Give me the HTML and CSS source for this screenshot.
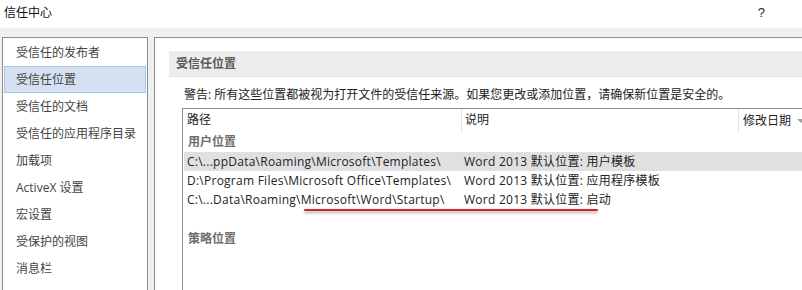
FILE: index.html
```html
<!DOCTYPE html>
<html lang="zh-CN">
<head>
<meta charset="utf-8">
<title>信任中心</title>
<link rel="stylesheet" href="styles.css">
</head>
<body>
<div class="titlebar">
  <span class="title">信任中心</span>
  <span class="help">?</span>
</div>
<div class="main">
  <ul class="nav">
    <li>受信任的发布者</li>
    <li class="active">受信任位置</li>
    <li>受信任的文档</li>
    <li>受信任的应用程序目录</li>
    <li>加载项</li>
    <li>ActiveX 设置</li>
    <li>宏设置</li>
    <li>受保护的视图</li>
    <li>消息栏</li>
  </ul>
  <div class="content">
    <div class="section-head">受信任位置</div>
    <div class="section-body">
      <p class="warning">警告: 所有这些位置都被视为打开文件的受信任来源。如果您更改或添加位置，请确保新位置是安全的。</p>
      <div class="table">
        <div class="thead">
          <div class="th col-path">路径</div>
          <div class="th col-desc">说明</div>
          <div class="th col-date">修改日期<span class="sort"></span></div>
        </div>
        <div class="group">用户位置</div>
        <div class="row selected">
          <div class="col-path">C:\...ppData\Roaming\Microsoft\Templates\</div>
          <div class="col-desc">Word 2013 默认位置: 用户模板</div>
        </div>
        <div class="row">
          <div class="col-path">D:\Program Files\Microsoft Office\Templates\</div>
          <div class="col-desc">Word 2013 默认位置: 应用程序模板</div>
        </div>
        <div class="row">
          <div class="col-path">C:\...Data\Roaming\Microsoft\Word\Startup\</div>
          <div class="col-desc">Word 2013 默认位置: 启动</div>
          <span class="mark"></span>
        </div>
        <div class="group policy">策略位置</div>
      </div>
    </div>
  </div>
</div>
</body>
</html>
```
FILE: styles.css
```css
* { box-sizing: border-box; }
html, body { margin: 0; padding: 0; }
body {
  width: 802px;
  height: 290px;
  overflow: hidden;
  background: #f0f0f0;
  font-family: "Open Sans", "Noto Sans CJK SC", sans-serif;
  font-size: 12px;
  color: #222;
}
.titlebar {
  height: 28px;
  background: #fff;
  display: flex;
  align-items: center;
  justify-content: space-between;
  padding: 0 37px 4px 4px;
}
.title { font-size: 12px; color: #111; }
.help { font-size: 13px; color: #222; font-family: "Liberation Sans", sans-serif; }
.main {
  display: flex;
  gap: 6px;
  padding: 9px 0 0 2px;
  height: 262px;
  overflow: hidden;
}
.nav {
  list-style: none;
  margin: 0;
  padding: 1px 1px 0 1px;
  width: 146px;
  height: 270px;
  background: #fff;
  border: 1px solid #8d8d8d;
  flex: none;
}
.nav li {
  height: 27px;
  line-height: 25px;
  padding-left: 11px;
  color: #444;
  border: 1px solid transparent;
  white-space: nowrap;
}
.nav li.active {
  background: #d5e1f2;
  border-color: #a8c4e8;
}
.content {
  flex: 1;
  min-width: 0;
  height: 270px;
  background: #fff;
  border: 1px solid #8d8d8d;
  border-right: none;
  padding: 13px 0 0 14px;
  overflow: hidden;
}
.section-head {
  height: 26px;
  line-height: 25px;
  background: #ececec;
  border-bottom: 1px solid #e2e2e2;
  padding-left: 7px;
  font-weight: bold;
  color: #5a5a5a;
}
.section-body { padding: 0 0 0 13px; }
.warning {
  margin: 0;
  height: 31px;
  line-height: 36px;
  padding-left: 2px;
  color: #222;
  white-space: nowrap;
}
.table {
  border: 1px solid #8d8d8d;
  border-right: none;
  height: 200px;
  padding: 0 0 0 1px;
  position: relative;
  width: 700px;
}
.thead {
  display: flex;
  height: 23px;
}
.th {
  line-height: 22px;
  padding-left: 4px;
  color: #222;
}
.thead .col-desc, .thead .col-date { border-left: 1px solid #e3e3e3; }
.col-path { width: 277px; flex: none; padding-left: 3px; white-space: nowrap; }
.col-desc { width: 277px; flex: none; padding-left: 3px; white-space: nowrap; }
.col-date { flex: none; width: 120px; display: flex; align-items: center; gap: 6px; white-space: nowrap; }
.sort {
  width: 0; height: 0;
  border-left: 4px solid transparent;
  border-right: 4px solid transparent;
  border-top: 4px solid #a0a0a0;
}
.group {
  height: 20px;
  line-height: 20px;
  padding-left: 4px;
  font-weight: bold;
  color: #6d6d6d;
}
.policy { margin-top: 19px; height: 22px; line-height: 22px; }
.row {
  display: flex;
  height: 19px;
  line-height: 19px;
  color: #222;
  position: relative;
  letter-spacing: 0.25px;
}
.row.selected { background: #e0e0e3; }
.mark {
  position: absolute;
  left: 120px;
  top: 19px;
  width: 294px;
  height: 2px;
  background: #d6212a;
  border-radius: 1px;
  box-shadow: 0 2px 3px rgba(0,0,0,0.35);
}
```
